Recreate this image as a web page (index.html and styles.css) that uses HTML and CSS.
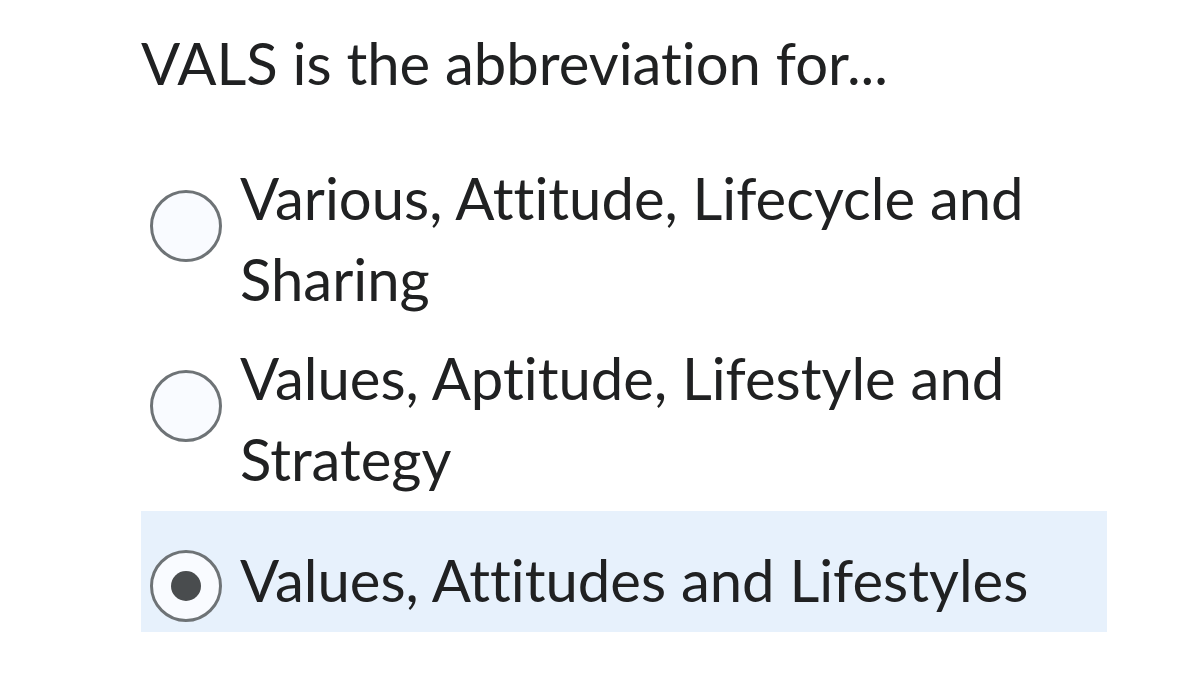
FILE: index.html
```html
<!DOCTYPE html>
<html lang="en">
<head>
<meta charset="utf-8">
<meta name="viewport" content="width=device-width, initial-scale=1">
<title>Quiz question</title>
<link rel="stylesheet" href="styles.css">
</head>
<body>
<form class="quiz">
  <fieldset class="question">
    <legend class="question-title">VALS is the abbreviation for...</legend>
    <div class="options">
      <div class="option">
        <input class="option-input" type="radio" name="vals" id="a">
        <label class="option-label" for="a">Various, Attitude, Lifecycle and Sharing</label>
      </div>
      <div class="option">
        <input class="option-input" type="radio" name="vals" id="b">
        <label class="option-label" for="b">Values, Aptitude, Lifestyle and Strategy</label>
      </div>
      <div class="option">
        <input class="option-input" type="radio" name="vals" id="c" checked>
        <label class="option-label" for="c">Values, Attitudes and Lifestyles</label>
      </div>
    </div>
  </fieldset>
</form>
</body>
</html>
```
FILE: styles.css
```css
* { box-sizing: border-box; }
body {
  margin: 0;
  background: #fff;
  color: #202122;
  font-family: Lato, "Liberation Sans", sans-serif;
  font-size: 58px;
  font-variant-ligatures: none;
  line-height: 81px;
}
.quiz { padding: 22px 72px 44px 141px; }
.question { min-width: 0; margin: 0; padding: 0; border: 0; }
.question-title { padding: 0; }
.options { padding-top: 48px; }
.option {
  display: flex;
  align-items: flex-start;
  gap: 18px;
  padding: 6px 9px 12px;
}
.option:has(:checked) {
  padding: 28px 9px 10px;
  background: #e7f1fc;
}
.option-input {
  appearance: none;
  display: grid;
  place-content: center;
  flex: none;
  width: 72px;
  height: 72px;
  margin: 33px 0 0;
  border: 3px solid #6e7376;
  border-radius: 50%;
  background: #f9fbff;
}
.option-input:checked { margin-top: 11px; }
.option-input:checked::before {
  content: "";
  width: 30px;
  height: 30px;
  border-radius: 50%;
  background: #494c4e;
}
.option-label { flex: 1; }
```
